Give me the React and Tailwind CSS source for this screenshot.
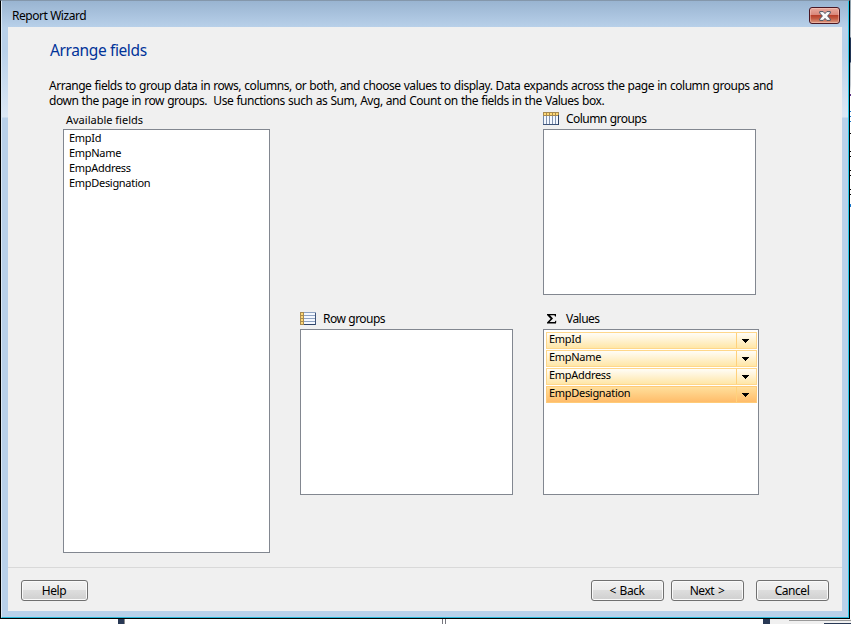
import clsx from "clsx";

const availableFields = ["EmpId", "EmpName", "EmpAddress", "EmpDesignation"];

const valueFields = [
  { name: "EmpId" },
  { name: "EmpName" },
  { name: "EmpAddress" },
  { name: "EmpDesignation", selected: true },
];

const description =
  "Arrange fields to group data in rows, columns, or both, and choose values to display. Data expands across the page in column groups and\n" +
  "down the page in row groups.  Use functions such as Sum, Avg, and Count on the fields in the Values box.";

function ColumnGroupIcon() {
  return (
    <svg width="16" height="13" viewBox="0 0 16 13" shapeRendering="crispEdges">
      <rect width="16" height="13" fill="#6f86a8" />
      <rect x="1" y="4" width="14" height="8" fill="#f4f8ff" />
      <rect width="16" height="4" fill="#a88a50" />
      {[1, 4, 7, 10, 13].map((x) => (
        <g key={x}>
          <rect x={x} y="1" width="2" height="2" fill="#ffd976" />
          <rect x={x + 2} y="4" width="1" height="8" fill="#8294b0" />
        </g>
      ))}
      <rect y="12" width="16" height="1" fill="#3d5378" />
      <rect x="15" y="3" width="1" height="10" fill="#2f4468" />
    </svg>
  );
}

function RowGroupIcon() {
  return (
    <svg width="16" height="13" viewBox="0 0 16 13" shapeRendering="crispEdges">
      <rect width="16" height="13" fill="#8fa3c2" />
      <rect x="4" y="1" width="11" height="11" fill="#f4f8ff" />
      <rect width="4" height="13" fill="#a88a50" />
      {[1, 4, 7, 10].map((y) => (
        <g key={y}>
          <rect x="1" y={y} width="2" height="2" fill="#ffd976" />
          <rect x="4" y={y + 2} width="11" height="1" fill="#8fa3c2" />
        </g>
      ))}
      <rect x="4" y="12" width="12" height="1" fill="#2f4468" />
      <rect x="15" y="1" width="1" height="12" fill="#3d5378" />
    </svg>
  );
}

function SigmaIcon() {
  return (
    <svg width="10" height="10" viewBox="0 0 10 10">
      <path d="M0 0H9V2.5H8L7.5 1.2H3L6 4.6L2.6 8H7.8L8.4 6.8H9.3L9 9.5H0V8.5L3.6 4.8L0 1Z" fill="#000" />
    </svg>
  );
}

function CloseButton() {
  return (
    <button className="mt-[6px] flex h-[17px] w-[31px] items-center justify-center rounded-[3px] border border-[#4a1723] bg-[linear-gradient(#e8aa9e_0%,#d9877a_46%,#b8402b_50%,#c25b43_70%,#dc9c84_100%)] shadow-[inset_0_0_0_1px_rgba(255,210,200,0.45)]">
      <svg width="12" height="10" viewBox="0 0 12 10" className="shrink-0">
        <path
          d="M0.7 0.6H4.2L6 2.6L7.8 0.6H11.3V2L8.6 5L11.3 8V9.4H7.8L6 7.4L4.2 9.4H0.7V8L3.4 5L0.7 2Z"
          fill="#fafafa"
          stroke="#4c5361"
          strokeWidth="1"
          strokeLinejoin="round"
        />
      </svg>
    </button>
  );
}

function WizardButton({ children, className }) {
  return (
    <button
      className={clsx(
        "h-[21px] rounded-[3px] border border-[#707070] bg-[linear-gradient(#f2f2f2_0%,#ebebeb_48%,#dddddd_50%,#cfcfcf_100%)] pt-px pr-px text-center text-[12px] leading-[18px] tracking-[-0.45px] [word-spacing:1px] shadow-[inset_0_0_0_1px_#fafafa]",
        className
      )}
    >
      {children}
    </button>
  );
}

function GroupLabel({ icon, children }) {
  return (
    <div className="flex h-[17px] items-center pt-[2px]">
      <div className="flex w-[23px] items-center">{icon}</div>
      <span className="text-[12px] leading-4 tracking-[-0.55px] [word-spacing:0.5px]">{children}</span>
    </div>
  );
}

function ValueItem({ name, selected }) {
  return (
    <li
      className={clsx(
        "flex h-[17px] border",
        selected
          ? "border-[#ffcb78] bg-linear-to-b from-[#ffdf9b] to-[#ffbc69]"
          : "border-[#ffd78a] bg-linear-to-b from-[#fffdf7] to-[#ffe6a6]"
      )}
    >
      <span className="flex-1 pl-[2px] text-[11px] leading-[12px] tracking-[-0.3px]">{name}</span>
      <span className="flex w-5 border-l border-[#ffd17c] pt-[6px] pl-[5px]">
        <svg width="7" height="4" viewBox="0 0 7 4" shapeRendering="crispEdges">
          <path d="M0 0H7V1H6V2H5V3H4V4H3V3H2V2H1V1H0Z" fill="#000" />
        </svg>
      </span>
    </li>
  );
}

function FieldsPage() {
  return (
    <main className="h-[540px] pt-[13px] pl-[41px]">
      <h1 className="h-5 pl-px text-[15.5px] leading-5 tracking-[-0.38px] text-[#003399]">Arrange fields</h1>
      <p className="mt-[18px] text-[12px] leading-[15px] tracking-[-0.46px] whitespace-pre [word-spacing:0.5px]">
        {description}
      </p>

      <div className="flex pl-[14px]">
        <section className="w-[207px]">
          <h2 className="mt-[3px] h-[18px] pl-[3px] text-[11px] leading-[17px]">Available fields</h2>
          <ul className="h-[424px] border border-[#828790] bg-white pl-[5px] text-[11px] leading-[15px] tracking-[-0.3px]">
            {availableFields.map((field) => (
              <li key={field}>{field}</li>
            ))}
          </ul>
        </section>

        <section className="mt-[201px] ml-[30px] w-[213px]">
          <GroupLabel icon={<RowGroupIcon />}>Row groups</GroupLabel>
          <div className="mt-[3px] h-[166px] border border-[#828790] bg-white" />
        </section>

        <div className="ml-[30px] w-[216px]">
          <section className="mt-px">
            <GroupLabel icon={<ColumnGroupIcon />}>Column groups</GroupLabel>
            <div className="mt-[3px] h-[166px] w-[213px] border border-[#828790] bg-white" />
          </section>
          <section className="mt-[14px]">
            <GroupLabel icon={<div className="pl-1"><SigmaIcon /></div>}>Values</GroupLabel>
            <ul className="mt-[3px] flex h-[166px] flex-col gap-px border border-[#828790] bg-white pt-[2px] pr-px pl-[2px]">
              {valueFields.map((field) => (
                <ValueItem key={field.name} {...field} />
              ))}
            </ul>
          </section>
        </div>
      </div>
    </main>
  );
}

function DesktopRight() {
  return (
    <div className="h-[619px] w-px bg-[linear-gradient(#8fa0ac_0,#b5bec6_37px,#1f3354_38px,#1f3354_62px,#b5bec6_63px,#c3cad1_85px,#fff_94px)] pt-[94px]">
      <div className="h-[2px] bg-[#5b2d82]" />
      <div className="mt-[15px] h-px bg-[#1774c9]" />
      <div className="mt-1 h-px bg-[#1774c9]" />
      <div className="mt-1 h-px bg-[#1774c9]" />
      <div className="mt-[11px] h-px bg-black" />
      <div className="mt-[17px] h-px bg-black" />
      <div className="mt-1 h-px bg-black" />
      <div className="mt-[13px] h-px bg-black" />
      <div className="mt-[4px] h-px bg-black" />
      <div className="mt-[13px] h-px bg-black" />
      <div className="mt-[4px] h-px bg-black" />
      <div className="mt-[9px] h-[3px] bg-[#1774c9]" />
    </div>
  );
}

function DesktopBottom() {
  return (
    <div className="flex h-[5px] bg-white">
      <div className="ml-[118px] w-[6px] bg-[#293955]" />
      <div className="w-px bg-[#8b8b8b]" />
      <div className="ml-[317px] w-px bg-[#77777f]" />
      <div className="ml-[2px] w-px bg-[#77777f]" />
      <div className="ml-[317px] w-[7px] bg-[#293955]" />
      <div className="flex flex-1 flex-col bg-[#f0f0f0]">
        <div className="ml-[19px] h-[2px] border-b border-[#9a9a9a]" />
        <div className="mt-[2px] ml-[54px] h-px bg-[#293955]" />
      </div>
    </div>
  );
}

function App() {
  return (
    <div className="h-[624px] w-[851px] overflow-hidden bg-white font-['Noto_Sans',sans-serif] text-black">
      <div className="flex">
        <div className="flex h-[619px] w-[850px] flex-col border border-black border-t-[#8497ab] bg-[#b9d1ea]">
          <div className="flex flex-1 flex-col border-r border-b border-l border-r-[#28c8e8] border-b-[#28b8d8] border-l-[#dce9f5] bg-[linear-gradient(#99b4d1_0,#b9d1ea_27px,#b9d1ea_50px,#dce8f5_116px,#b9d1ea_117px)] px-[6px] pb-[6px]">
            <header className="flex h-[26px] justify-between pr-[2px] pl-1">
              <span className="pt-[7px] text-[12px] leading-4 tracking-[-0.45px]">Report Wizard</span>
              <CloseButton />
            </header>
            <div className="flex-1 bg-[#f0f0f0]">
              <FieldsPage />
              <footer className="flex h-[44px] border-t border-[#d9d9d9] pt-3 pl-[13px]">
                <WizardButton className="w-[67px]">Help</WizardButton>
                <WizardButton className="ml-[503px] w-[73px]">&lt; Back</WizardButton>
                <WizardButton className="ml-[7px] w-[73px]">Next &gt;</WizardButton>
                <WizardButton className="ml-3 w-[73px]">Cancel</WizardButton>
              </footer>
            </div>
          </div>
        </div>
        <DesktopRight />
      </div>
      <DesktopBottom />
    </div>
  );
}

export default App;
